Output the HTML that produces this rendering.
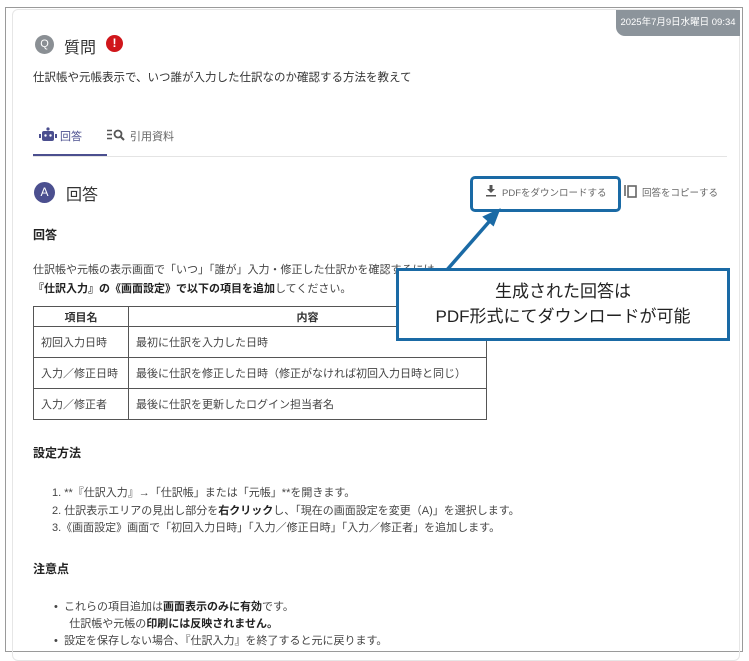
<!DOCTYPE html>
<html><head><meta charset="utf-8"><style>
body{margin:0;width:749px;height:661px;background:#fff;font-family:"Liberation Sans","Noto Sans CJK JP",sans-serif;color:#333;position:relative;overflow:hidden}
.a{position:absolute;white-space:nowrap}
.frame{position:absolute;left:5px;top:7px;width:736px;height:643px;border:1px solid #9a9a9a}
.card{position:absolute;left:12px;top:9px;width:726px;height:650px;border:1px solid #e6e6e6;border-radius:6px}
table{position:absolute;left:33px;top:306px;border-collapse:collapse;font-size:11px;color:#444}
td,th{border:1px solid #555;padding:0 7px;height:30px}
th{height:19px;font-weight:bold;color:#333}
b{color:#222}
</style></head><body>
<div class="frame"></div><div class="card"></div>
<div class="a" style="left:616px;top:10px;width:124px;height:26px;background:#8c949b;border-radius:0 0 0 9px;color:#fff;font-size:9.5px;line-height:26px;text-align:center">2025年7月9日水曜日 09:34</div>
<div class="a" style="left:35px;top:35px;width:19px;height:19px;border-radius:50%;background:#8a8f94;color:#fff;font-size:11px;line-height:19px;text-align:center">Q</div>
<div class="a" style="left:64px;top:34px;font-size:16px">質問</div>
<div class="a" style="left:106px;top:35px;width:17px;height:17px;border-radius:50%;background:#d0161b;color:#fff;font-size:12px;font-weight:bold;line-height:17px;text-align:center">!</div>
<div class="a" style="left:33px;top:69px;font-size:11.5px">仕訳帳や元帳表示で、いつ誰が入力した仕訳なのか確認する方法を教えて</div>
<svg class="a" style="left:39px;top:127px" width="18" height="16" viewBox="0 0 18 16"><circle cx="9" cy="2" r="1.6" fill="#4b4f8f"/><rect x="3" y="4" width="12" height="10" rx="2" fill="#4b4f8f"/><rect x="0" y="7" width="2" height="4" fill="#4b4f8f"/><rect x="16" y="7" width="2" height="4" fill="#4b4f8f"/><circle cx="6.5" cy="8.5" r="1.2" fill="#fff"/><circle cx="11.5" cy="8.5" r="1.2" fill="#fff"/></svg>
<div class="a" style="left:60px;top:128px;font-size:11px;color:#4b4f8f">回答</div>
<svg class="a" style="left:107px;top:129px" width="18" height="12" viewBox="0 0 18 12"><path d="M0 1.5h5M0 5.5h5M0 9.5h5" stroke="#555" stroke-width="1.6"/><circle cx="11" cy="5" r="3.5" fill="none" stroke="#555" stroke-width="1.8"/><path d="M13.5 7.5L17 11" stroke="#555" stroke-width="2"/></svg>
<div class="a" style="left:130px;top:128px;font-size:11px;color:#666">引用資料</div>
<div class="a" style="left:33px;top:156px;width:694px;height:1px;background:#e4e4e4"></div>
<div class="a" style="left:33px;top:154px;width:74px;height:2px;background:#4b4f8f"></div>
<div class="a" style="left:34px;top:182px;width:21px;height:21px;border-radius:50%;background:#4b4f8f;color:#fff;font-size:12px;line-height:21px;text-align:center">A</div>
<div class="a" style="left:66px;top:181px;font-size:16px">回答</div>
<div class="a" style="left:470px;top:176px;width:145px;height:30px;border:3px solid #1a6aa5;border-radius:5px"></div>
<svg class="a" style="left:486px;top:185px" width="10" height="12" viewBox="0 0 10 12"><path d="M3.5 0h3v4h2.5L5 8 1 4h2.5z" fill="#555"/><rect x="0" y="10" width="10" height="1.5" fill="#555"/></svg>
<div class="a" style="left:502px;top:185px;font-size:9.5px;color:#666">PDFをダウンロードする</div>
<svg class="a" style="left:624px;top:183px" width="13" height="15" viewBox="0 0 13 15"><path d="M1 2v11" stroke="#666" stroke-width="1.6" fill="none"/><rect x="4" y="3" width="8" height="11" fill="none" stroke="#666" stroke-width="1.6"/></svg>
<div class="a" style="left:642px;top:185px;font-size:9.5px;color:#666">回答をコピーする</div>
<div class="a" style="left:33px;top:226px;font-size:12px;font-weight:bold;color:#222">回答</div>
<div class="a" style="left:33px;top:261px;font-size:11px;color:#444">仕訳帳や元帳の表示画面で「いつ」「誰が」入力・修正した仕訳かを確認するには</div>
<div class="a" style="left:33px;top:280px;font-size:11px;color:#444"><b>『仕訳入力』の《画面設定》で以下の項目を追加</b>してください。</div>
<table><tr><th style="width:80px">項目名</th><th style="width:343px">内容</th></tr>
<tr><td>初回入力日時</td><td>最初に仕訳を入力した日時</td></tr>
<tr><td>入力／修正日時</td><td>最後に仕訳を修正した日時（修正がなければ初回入力日時と同じ）</td></tr>
<tr><td>入力／修正者</td><td>最後に仕訳を更新したログイン担当者名</td></tr></table>
<svg class="a" style="left:440px;top:205px" width="70" height="70" viewBox="0 0 70 70"><path d="M6 66L55 10" stroke="#1a6aa5" stroke-width="3.5"/><path d="M58 6L45 12L53 19Z" fill="#1a6aa5" stroke="#1a6aa5" stroke-width="3"/></svg>
<div class="a" style="left:396px;top:268px;width:328px;border:3px solid #1a6aa5;background:#fff;font-size:17px;color:#222;text-align:center;line-height:25px;padding-top:8px;height:59px">生成された回答は<br>PDF形式にてダウンロードが可能</div>
<div class="a" style="left:33px;top:444px;font-size:12px;font-weight:bold;color:#222">設定方法</div>
<div class="a" style="left:52px;top:485px;font-size:11px;color:#444;line-height:17.5px">1. **『仕訳入力』→「仕訳帳」または「元帳」**を開きます。<br>2. 仕訳表示エリアの見出し部分を<b>右クリック</b>し、「現在の画面設定を変更（A)」を選択します。<br>3.《画面設定》画面で「初回入力日時」「入力／修正日時」「入力／修正者」を追加します。</div>
<div class="a" style="left:33px;top:560px;font-size:12px;font-weight:bold;color:#222">注意点</div>
<div class="a" style="left:54px;top:599px;font-size:11px;color:#444;line-height:17px">•&nbsp;&nbsp;これらの項目追加は<b>画面表示のみに有効</b>です。<br>&nbsp;&nbsp;&nbsp;&nbsp;&nbsp;仕訳帳や元帳の<b>印刷には反映されません。</b><br>•&nbsp;&nbsp;設定を保存しない場合、『仕訳入力』を終了すると元に戻ります。</div>
</body></html>
